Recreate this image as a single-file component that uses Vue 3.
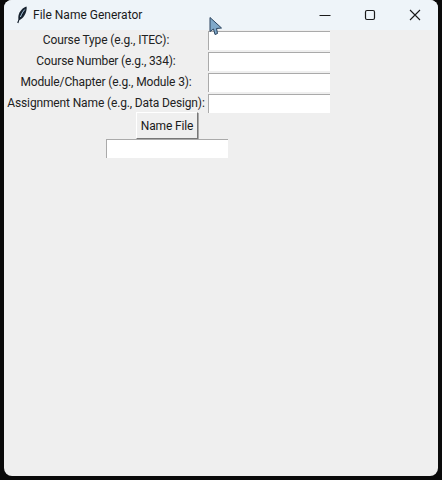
<script setup>
const fields = [
  'Course Type (e.g., ITEC):',
  'Course Number (e.g., 334):',
  'Module/Chapter (e.g., Module 3):',
  'Assignment Name (e.g., Data Design):',
]
</script>

<template>
  <div class="screen">
    <div class="window">
      <header class="titlebar">
        <svg class="feather" width="14" height="18" viewBox="0 0 14 18">
          <path d="M11.500 0.500C8 1.500 4.500 5 3.500 9.500C3.100 11.500 3.300 13 4 14C7 13.500 9.800 9.800 11 6C11.600 4 11.900 2 11.500 0.500Z" fill="#16212e" />
          <path d="M9.500 4C7 7.500 4.500 11 2.800 17" fill="none" stroke="#16212e" stroke-width="1.200" />
          <path d="M9.800 3.500C8 5.500 6.500 8 5.400 11" fill="none" stroke="#a9c8e2" stroke-width="1" />
        </svg>
        <span class="title">File Name Generator</span>
        <div class="controls">
          <svg width="12" height="12" viewBox="0 0 12 12">
            <path d="M0.500 6.500H11.500" stroke="#1a1a1a" stroke-width="1.200" />
          </svg>
          <svg width="12" height="12" viewBox="0 0 12 12">
            <rect x="1.500" y="1.500" width="9" height="9" rx="1.500" fill="none" stroke="#1a1a1a" stroke-width="1.200" />
          </svg>
          <svg width="12" height="12" viewBox="0 0 12 12">
            <path d="M1 1L11 11M11 1L1 11" stroke="#1a1a1a" stroke-width="1.100" />
          </svg>
        </div>
      </header>

      <main class="form">
        <template v-for="field in fields" :key="field">
          <label class="label">{{ field }}</label>
          <div class="entry"></div>
        </template>
        <button class="name-btn" type="button">Name File</button>
        <div class="entry output"></div>
      </main>
    </div>

    <svg class="cursor" width="14" height="20" viewBox="0 0 14 20">
      <path d="M1 0.500L1 14.500L4.500 12L6 17.500L8.500 16.500L7.500 11.500L12.500 11Z" fill="#7fa8c9" stroke="#2a435e" stroke-width="1" />
    </svg>
  </div>
</template>

<style>
body {
  background: #000;
}
</style>

<style scoped>
.screen {
  position: relative;
  width: 442px;
  height: 480px;
  padding: 0 4px 4px;
  box-sizing: border-box;
  background: #0a0a0a;
  font-family: Roboto, "Liberation Sans", sans-serif;
}
.window {
  height: 476px;
  border-radius: 8px;
  background: #efefef;
  overflow: hidden;
}
.titlebar {
  display: flex;
  align-items: center;
  height: 30px;
  padding-left: 11px;
  background: #eef4f9;
}
.feather {
  margin-right: 4px;
}
.title {
  font-size: 12px;
  color: #1a1a1a;
}
.controls {
  display: flex;
  gap: 33px;
  margin-left: auto;
  margin-right: 17px;
}
.form {
  display: grid;
  grid-template-columns: 204px 122px;
  width: 326px;
  padding-top: 1px;
}
.label {
  height: 21px;
  line-height: 19px;
  font-size: 12px;
  letter-spacing: -0.14px;
  color: #222;
  text-align: center;
  white-space: nowrap;
}
.entry {
  height: 19px;
  background: #fff;
  border-top: 1px solid #aaa;
  border-left: 1px solid #aaa;
  box-sizing: border-box;
}
.name-btn {
  grid-column: 1 / 3;
  justify-self: center;
  width: 62px;
  height: 27px;
  margin-top: -3px;
  padding: 0;
  font-family: inherit;
  font-size: 12px;
  letter-spacing: -0.14px;
  color: #1a1a1a;
  background: #efefef;
  border: 1px solid;
  border-color: #fff #777 #777 #fff;
  box-shadow: 1px 1px 0 #aaa;
}
.output {
  grid-column: 1 / 3;
  justify-self: center;
  width: 122px;
}
.cursor {
  position: absolute;
  left: 209px;
  top: 17px;
}
</style>
